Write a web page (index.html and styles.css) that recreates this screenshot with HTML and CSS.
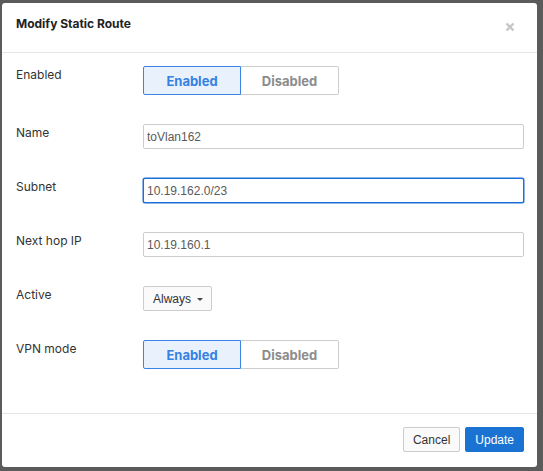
FILE: index.html
```html
<!DOCTYPE html>
<html lang="en">
<head>
    <meta charset="UTF-8">
    <meta name="viewport" content="width=device-width, initial-scale=1.0">
    <title>Modify Static Route</title>
    <link rel="stylesheet" href="styles.css">
</head>
<body>
    <div class="modal">
        <div class="modal-header">
            <h4 class="modal-title">Modify Static Route</h4>
            <button class="close" type="button" aria-label="Close">
                <svg width="10" height="10" viewBox="0 0 10 10">
                    <path d="M1.5 1.5 L8.5 8.5 M8.5 1.5 L1.5 8.5" stroke="#c6c6c6" stroke-width="2.4" fill="none"/>
                </svg>
            </button>
        </div>

        <form class="modal-body" onsubmit="return false">
            <div class="form-row">
                <label>Enabled</label>
                <div class="toggle">
                    <button type="button" class="toggle-btn active">Enabled</button>
                    <button type="button" class="toggle-btn">Disabled</button>
                </div>
            </div>
            <div class="form-row">
                <label for="name">Name</label>
                <input id="name" class="text-input" type="text" value="toVlan162">
            </div>
            <div class="form-row">
                <label for="subnet">Subnet</label>
                <input id="subnet" class="text-input focused" type="text" value="10.19.162.0/23">
            </div>
            <div class="form-row">
                <label for="nexthop">Next hop IP</label>
                <input id="nexthop" class="text-input" type="text" value="10.19.160.1">
            </div>
            <div class="form-row">
                <label>Active</label>
                <div>
                    <button type="button" class="dropdown">Always <span class="caret"></span></button>
                </div>
            </div>
            <div class="form-row">
                <label>VPN mode</label>
                <div class="toggle">
                    <button type="button" class="toggle-btn active">Enabled</button>
                    <button type="button" class="toggle-btn">Disabled</button>
                </div>
            </div>
        </form>

        <div class="modal-footer">
            <button type="button" class="btn">Cancel</button>
            <button type="button" class="btn btn-primary">Update</button>
        </div>
    </div>
</body>
</html>
```

FILE: styles.css
```css
body {
    margin: 0;
    padding: 3px 0 0 2px;
    background-color: #5b5b5b;
    font-family: Inter, "Liberation Sans", Arial, sans-serif;
    color: #333;
}
.modal {
    width: 535px;
    height: 464px;
    background: white;
    border-radius: 3px;
    display: flex;
    flex-direction: column;
}
.modal-header {
    display: flex;
    justify-content: space-between;
    align-items: flex-start;
    padding: 12px 14px 19px 14px;
    border-bottom: 1px solid #e5e5e5;
}
.modal-title {
    margin: 0;
    font-size: 12px;
    font-weight: 700;
    line-height: 18px;
    color: #222;
}
.close {
    margin: 7px 8px 0 0;
    padding: 0;
    border: none;
    background: none;
    width: 10px;
    height: 10px;
    cursor: pointer;
}
.close svg {
    display: block;
}
.modal-body {
    flex: 1;
    display: flex;
    flex-direction: column;
    gap: 29px;
    padding: 13px 13px 0 14px;
    margin: 0;
}
.form-row {
    display: grid;
    grid-template-columns: 127px 1fr;
    align-items: start;
}
.form-row label {
    font-size: 12px;
    line-height: 17px;
    color: #333;
}
.toggle {
    display: flex;
}
.toggle-btn {
    width: 98px;
    height: 29px;
    padding: 0;
    font-family: Inter, "Liberation Sans", Arial, sans-serif;
    font-size: 13px;
    font-weight: 700;
    color: #8c8c8c;
    background: white;
    border: 1px solid #cccccc;
    border-left: none;
    border-radius: 0 2px 2px 0;
    cursor: pointer;
}
.toggle-btn.active {
    color: #3581e3;
    background: #e9f1fd;
    border: 1px solid #3b84e6;
    border-radius: 2px 0 0 2px;
}
.text-input {
    box-sizing: border-box;
    width: 100%;
    height: 25px;
    margin: 0;
    padding: 0 3px;
    font-family: "Liberation Sans", Arial, sans-serif;
    font-size: 12px;
    color: #5a5a5a;
    border: 1px solid #cccccc;
    border-radius: 2px;
    outline: none;
}
.text-input.focused {
    border-color: #1c6fd5;
    box-shadow: 0 0 0 0.5px #1c6fd5;
}
.dropdown {
    box-sizing: border-box;
    height: 25px;
    width: 69px;
    padding: 0 0 0 9px;
    display: flex;
    align-items: center;
    font-family: "Liberation Sans", Arial, sans-serif;
    font-size: 12px;
    color: #333;
    background: #fafafa;
    border: 1px solid #cccccc;
    border-radius: 2px;
    cursor: pointer;
}
.caret {
    display: inline-block;
    margin-left: 6px;
    margin-top: 1px;
    border-top: 3px solid #444;
    border-left: 3px solid transparent;
    border-right: 3px solid transparent;
}
.modal-footer {
    display: flex;
    justify-content: flex-end;
    gap: 5px;
    padding: 13px 13px 15px 13px;
    border-top: 1px solid #e5e5e5;
}
.btn {
    height: 25px;
    padding: 0 9px;
    font-family: "Liberation Sans", Arial, sans-serif;
    font-size: 12px;
    color: #333;
    background: #fafafa;
    border: 1px solid #cccccc;
    border-radius: 2px;
    cursor: pointer;
}
.btn-primary {
    color: white;
    background: #1a72d2;
    border-color: #1a72d2;
}
```
